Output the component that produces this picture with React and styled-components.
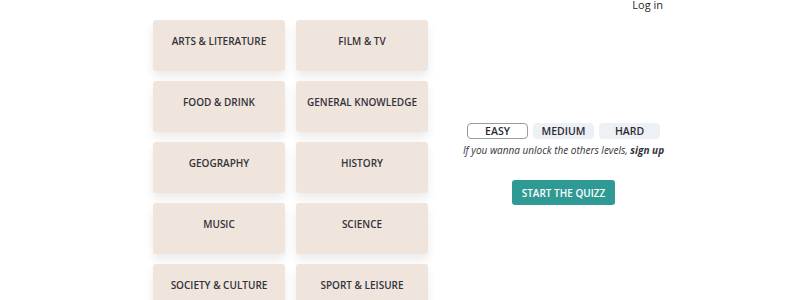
import styled, { createGlobalStyle } from "styled-components";

const GlobalStyle = createGlobalStyle`
    body {
        margin: 0;
        background: #fff;
        font-family: "Open Sans", "Noto Sans", sans-serif;
        color: #2b2b33;
    }
`

const categories = [
    "ARTS & LITERATURE",
    "FILM & TV",
    "FOOD & DRINK",
    "GENERAL KNOWLEDGE",
    "GEOGRAPHY",
    "HISTORY",
    "MUSIC",
    "SCIENCE",
    "SOCIETY & CULTURE",
    "SPORT & LEISURE",
]

export default function App(){
    return(
        <Page>
            <GlobalStyle />
            <Header>
                <LogIn>Log in</LogIn>
            </Header>
            <Main>
                <Grid>
                    {categories.map((c) => (
                        <Card key={c}>{c}</Card>
                    ))}
                </Grid>
                <Side>
                    <Levels>
                        <Level active>EASY</Level>
                        <Level>MEDIUM</Level>
                        <Level>HARD</Level>
                    </Levels>
                    <Hint>If you wanna unlock the others levels, <b>sign up</b></Hint>
                    <Start>START THE QUIZZ</Start>
                </Side>
            </Main>
        </Page>
    )
}

const Page = styled.div`
    width: 800px;
    height: 300px;
    overflow: hidden;
`

const Header = styled.div`
    height: 20px;
    display: flex;
    justify-content: flex-end;
    padding-right: 137px;
`

const LogIn = styled.span`
    font-size: 11px;
    font-weight: 500;
    line-height: 10px;
    color: #1f1f24;
`

const Main = styled.div`
    display: flex;
    padding-left: 153px;
`

const Grid = styled.div`
    display: grid;
    grid-template-columns: 132px 132px;
    column-gap: 11px;
    row-gap: 10px;
`

const Card = styled.div`
    height: 51px;
    box-sizing: border-box;
    padding-top: 14px;
    background: #efe5dc;
    border-radius: 3px;
    box-shadow: 0 6px 10px rgba(0, 0, 0, 0.08);
    text-align: center;
    font-size: 10px;
    font-weight: 600;
    color: #33333b;
`

const Side = styled.div`
    width: 271px;
    display: flex;
    flex-direction: column;
    align-items: center;
    padding-top: 103px;
`

const Levels = styled.div`
    display: flex;
    gap: 5px;
`

const Level = styled.div`
    width: 61px;
    height: 16px;
    box-sizing: border-box;
    border-radius: 4px;
    background: ${(p) => (p.active ? "#fff" : "#edf1f5")};
    border: 1px solid ${(p) => (p.active ? "#9a9aa2" : "#edf1f5")};
    display: flex;
    align-items: center;
    justify-content: center;
    font-size: 10.5px;
    font-weight: 600;
    color: #2b2b33;
`

const Hint = styled.p`
    margin: 4px 0 0;
    font-size: 10px;
    font-style: italic;
    color: #33333b;

    b {
        font-weight: 700;
    }
`

const Start = styled.button`
    margin-top: 23px;
    width: 103px;
    height: 25px;
    border: none;
    border-radius: 3px;
    background: #2f9a93;
    color: #fff;
    font-family: inherit;
    font-size: 10px;
    font-weight: 600;
`
